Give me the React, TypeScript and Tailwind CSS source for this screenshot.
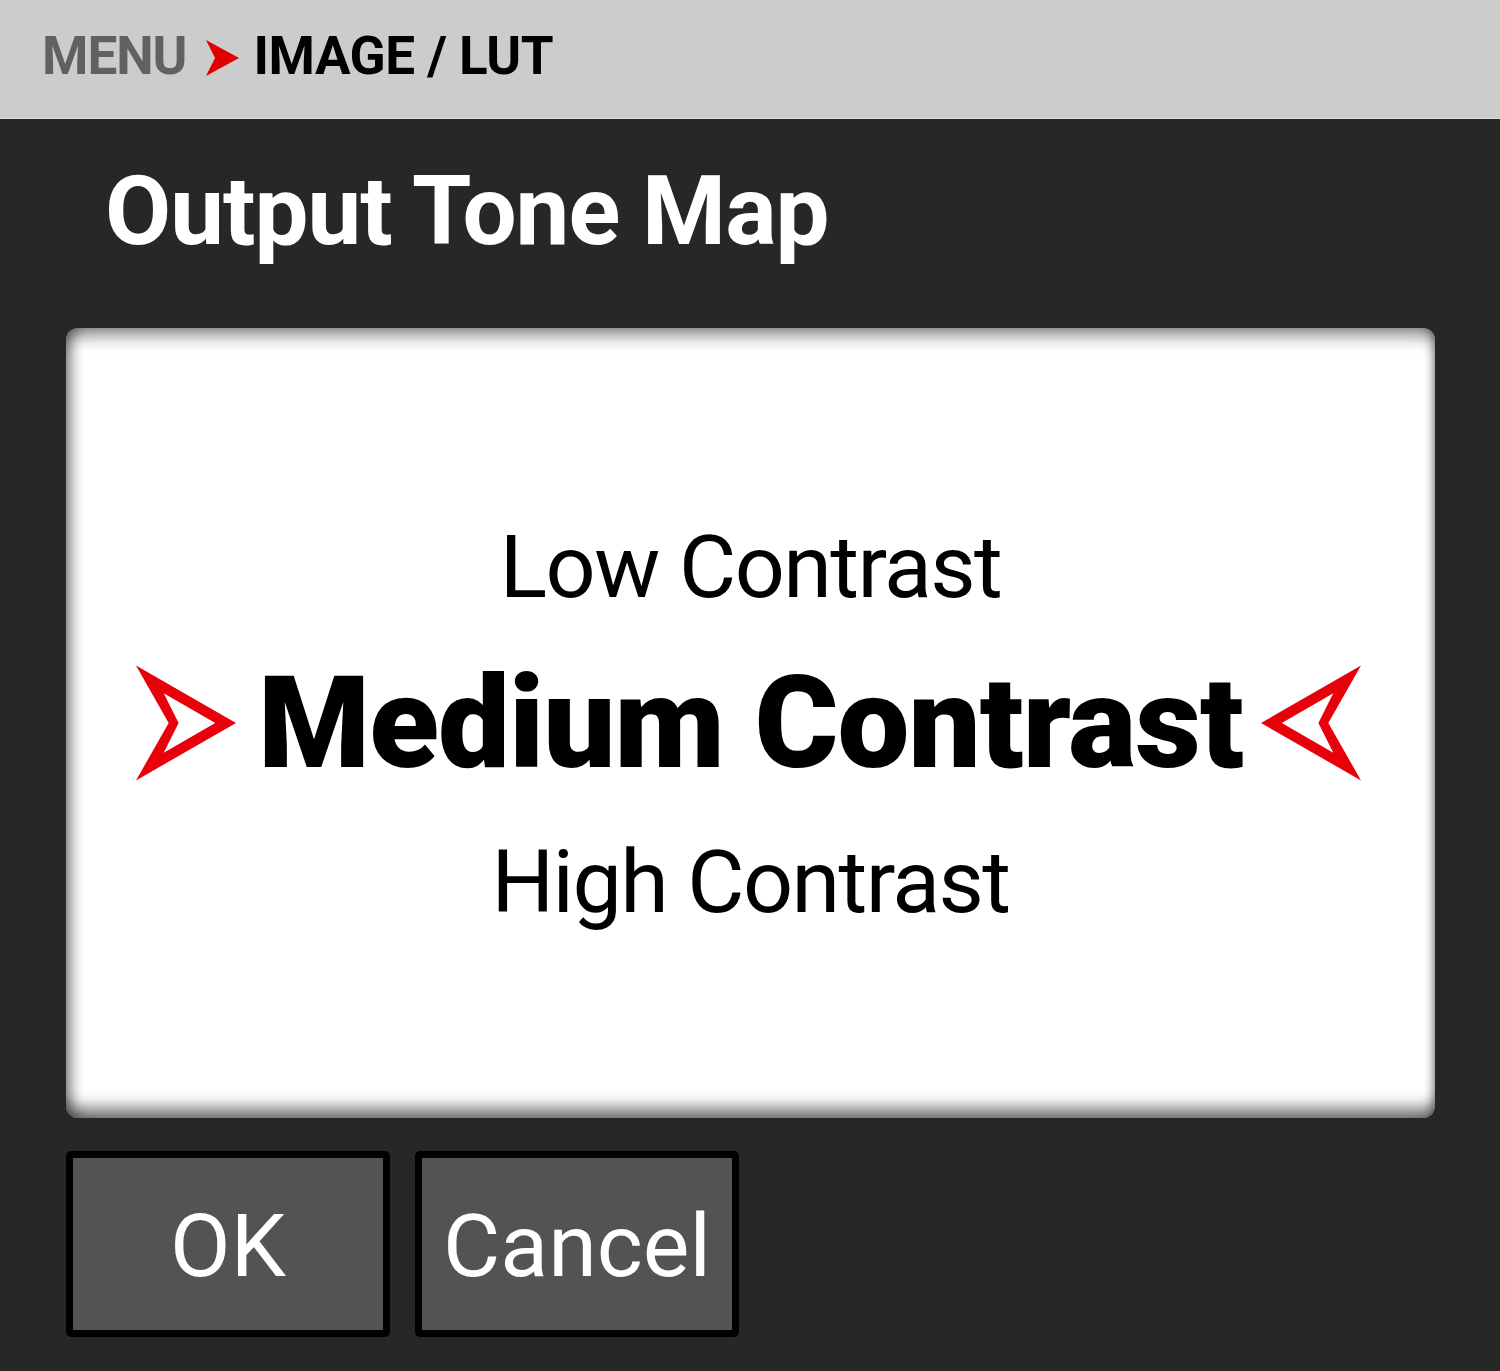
import React from "react";

function HeaderArrow() {
  return (
    <svg width="33" height="36" viewBox="0 0 33 36" className="block">
      <polygon points="0,0 33,18 0,36 9,18" fill="#e00000" />
    </svg>
  );
}

// Outlined red arrowhead used to flank the selected option.
function Pointer({ flip = false }: { flip?: boolean }) {
  return (
    <svg
      width="100"
      height="116"
      viewBox="0 0 101 116"
      className={flip ? "block -scale-x-100" : "block"}
    >
      <path
        d="M0,0 L101,58 L0,116 L33,58 Z M28,28 L80,58 L28,88 L43,58 Z"
        fill="#e8000b"
        fillRule="evenodd"
      />
    </svg>
  );
}

function Button({ label }: { label: string }) {
  return (
    <button className="w-[324px] h-[186px] rounded-[5px] border-[7px] border-black bg-[#535353] text-white text-[88px] leading-none font-normal flex items-center justify-center pt-[4px]">
      {label}
    </button>
  );
}

export default function App() {
  return (
    <div className="w-[1500px] h-[1371px] bg-[#272727] font-['Roboto','Liberation_Sans',sans-serif] flex flex-col overflow-hidden">
      <header className="h-[119px] bg-[#cccccc] border-b border-[#dadada] flex items-start pt-[30px] pl-[42px] shrink-0">
        <span className="text-[53px] leading-none font-bold text-[#616161] tracking-[-1px]">
          MENU
        </span>
        <span className="ml-[19px] mt-[10px]">
          <HeaderArrow />
        </span>
        <span className="ml-[15px] text-[53px] leading-none font-bold text-black tracking-[-0.5px]">
          IMAGE / LUT
        </span>
      </header>

      <h1 className="mt-[44px] ml-[105px] text-[96px] leading-none font-bold text-white tracking-[-1px]">
        Output Tone Map
      </h1>

      <div className="mt-[69px] ml-[66px] mr-[65px] h-[790px] shrink-0 rounded-[12px] bg-white shadow-[inset_0_16px_16px_-8px_rgba(0,0,0,0.45),inset_14px_0_14px_-8px_rgba(0,0,0,0.4),inset_0_-18px_16px_-8px_rgba(0,0,0,0.55),inset_-8px_0_10px_-6px_rgba(0,0,0,0.35)] flex flex-col items-center pt-[195px]">
        <div className="text-[88px] leading-none font-normal text-black tracking-[-1.6px]">
          Low Contrast
        </div>
        <div className="mt-[48px] flex items-center -translate-x-[2px]">
          <Pointer />
          <span className="ml-[22px] mr-[18px] text-[128px] leading-none font-black text-black tracking-[-1px]">
            Medium Contrast
          </span>
          <Pointer flip />
        </div>
        <div className="mt-[51px] text-[88px] leading-none font-normal text-black tracking-[-1.6px]">
          High Contrast
        </div>
      </div>

      <div className="mt-[33px] ml-[66px] flex gap-[25px]">
        <Button label="OK" />
        <Button label="Cancel" />
      </div>
    </div>
  );
}
